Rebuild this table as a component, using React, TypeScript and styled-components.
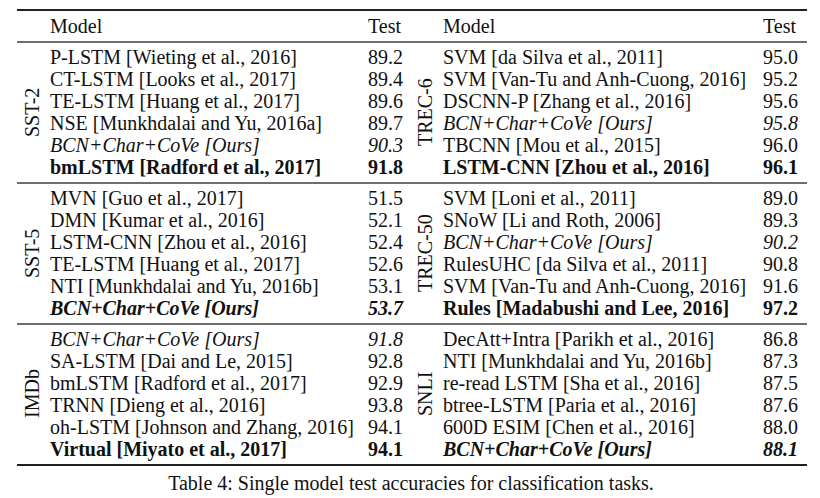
import { Fragment } from 'react'
import styled, { createGlobalStyle } from 'styled-components'

const GlobalStyle = createGlobalStyle`
  body {
    margin: 0;
    background: #fff;
    color: #111;
    font-family: 'Liberation Serif', 'Times New Roman', serif;
  }
`

type Style = 'plain' | 'italic' | 'bold' | 'bolditalic'

interface Row {
  model: string
  test: string
  style?: Style
}

interface Group {
  label: string
  rows: Row[]
}

const ours = 'BCN+Char+CoVe [Ours]'

const sections: [Group, Group][] = [
  [
    {
      label: 'SST-2',
      rows: [
        { model: 'P-LSTM [Wieting et al., 2016]', test: '89.2' },
        { model: 'CT-LSTM [Looks et al., 2017]', test: '89.4' },
        { model: 'TE-LSTM [Huang et al., 2017]', test: '89.6' },
        { model: 'NSE [Munkhdalai and Yu, 2016a]', test: '89.7' },
        { model: ours, test: '90.3', style: 'italic' },
        { model: 'bmLSTM [Radford et al., 2017]', test: '91.8', style: 'bold' },
      ],
    },
    {
      label: 'TREC-6',
      rows: [
        { model: 'SVM [da Silva et al., 2011]', test: '95.0' },
        { model: 'SVM [Van-Tu and Anh-Cuong, 2016]', test: '95.2' },
        { model: 'DSCNN-P [Zhang et al., 2016]', test: '95.6' },
        { model: ours, test: '95.8', style: 'italic' },
        { model: 'TBCNN [Mou et al., 2015]', test: '96.0' },
        { model: 'LSTM-CNN [Zhou et al., 2016]', test: '96.1', style: 'bold' },
      ],
    },
  ],
  [
    {
      label: 'SST-5',
      rows: [
        { model: 'MVN [Guo et al., 2017]', test: '51.5' },
        { model: 'DMN [Kumar et al., 2016]', test: '52.1' },
        { model: 'LSTM-CNN [Zhou et al., 2016]', test: '52.4' },
        { model: 'TE-LSTM [Huang et al., 2017]', test: '52.6' },
        { model: 'NTI [Munkhdalai and Yu, 2016b]', test: '53.1' },
        { model: ours, test: '53.7', style: 'bolditalic' },
      ],
    },
    {
      label: 'TREC-50',
      rows: [
        { model: 'SVM [Loni et al., 2011]', test: '89.0' },
        { model: 'SNoW [Li and Roth, 2006]', test: '89.3' },
        { model: ours, test: '90.2', style: 'italic' },
        { model: 'RulesUHC [da Silva et al., 2011]', test: '90.8' },
        { model: 'SVM [Van-Tu and Anh-Cuong, 2016]', test: '91.6' },
        { model: 'Rules [Madabushi and Lee, 2016]', test: '97.2', style: 'bold' },
      ],
    },
  ],
  [
    {
      label: 'IMDb',
      rows: [
        { model: ours, test: '91.8', style: 'italic' },
        { model: 'SA-LSTM [Dai and Le, 2015]', test: '92.8' },
        { model: 'bmLSTM [Radford et al., 2017]', test: '92.9' },
        { model: 'TRNN [Dieng et al., 2016]', test: '93.8' },
        { model: 'oh-LSTM [Johnson and Zhang, 2016]', test: '94.1' },
        { model: 'Virtual [Miyato et al., 2017]', test: '94.1', style: 'bold' },
      ],
    },
    {
      label: 'SNLI',
      rows: [
        { model: 'DecAtt+Intra [Parikh et al., 2016]', test: '86.8' },
        { model: 'NTI [Munkhdalai and Yu, 2016b]', test: '87.3' },
        { model: 're-read LSTM [Sha et al., 2016]', test: '87.5' },
        { model: 'btree-LSTM [Paria et al., 2016]', test: '87.6' },
        { model: '600D ESIM [Chen et al., 2016]', test: '88.0' },
        { model: ours, test: '88.1', style: 'bolditalic' },
      ],
    },
  ],
]

const Page = styled.div`
  padding-top: 9px;
  width: 820px;
`

const Table = styled.div`
  margin-left: 17px;
  width: 790px;
  border-top: 2px solid #222;
  border-bottom: 2px solid #222;
  font-size: 20px;
`

const Halves = styled.div<{ $rule?: boolean; $head?: boolean }>`
  display: grid;
  grid-template-columns: 393px 397px;
  padding: ${(p) => (p.$head ? '0' : '3px 0 4px')};
  border-top: ${(p) => (p.$rule ? '2px solid #6e6e6e' : 'none')};
`

const Panel = styled.div<{ $right?: boolean }>`
  display: grid;
  grid-template-columns: 33px 1fr ${(p) => (p.$right ? '44px' : '42px')};
  grid-auto-rows: 22px;
  line-height: 22px;
`

const HeadPanel = styled(Panel)`
  grid-auto-rows: 30px;
  line-height: 30px;
`

// dataset name, rotated to read bottom to top
const Label = styled.div`
  grid-row: 1 / span 6;
  grid-column: 1;
  display: flex;
  align-items: center;
  justify-content: center;
  writing-mode: vertical-rl;
  transform: rotate(180deg);
  padding-left: 3px;
`

const Cell = styled.div<{ $look?: Style }>`
  white-space: nowrap;
  font-style: ${(p) => (p.$look === 'italic' || p.$look === 'bolditalic' ? 'italic' : 'normal')};
  font-weight: ${(p) => (p.$look === 'bold' || p.$look === 'bolditalic' ? 'bold' : 'normal')};
`

const ModelCell = styled(Cell)`
  grid-column: 2;
`

const TestCell = styled(Cell)`
  grid-column: 3;
`

const Caption = styled.div`
  text-align: center;
  font-size: 20px;
  margin-top: 6px;
  padding-left: 2px;
`

const GroupPanel = ({ group, right }: { group: Group; right?: boolean }) => (
  <Panel $right={right}>
    <Label>{group.label}</Label>
    {group.rows.map((r, i) => (
      <Fragment key={i}>
        <ModelCell $look={r.style}>{r.model}</ModelCell>
        <TestCell $look={r.style}>{r.test}</TestCell>
      </Fragment>
    ))}
  </Panel>
)

export default function App() {
  return (
    <Page>
      <GlobalStyle />
      <Table>
        <Halves $head>
          <HeadPanel>
            <ModelCell>Model</ModelCell>
            <TestCell>Test</TestCell>
          </HeadPanel>
          <HeadPanel $right>
            <ModelCell>Model</ModelCell>
            <TestCell>Test</TestCell>
          </HeadPanel>
        </Halves>
        {sections.map(([l, r]) => (
          <Halves key={l.label} $rule>
            <GroupPanel group={l} />
            <GroupPanel group={r} right />
          </Halves>
        ))}
      </Table>
      <Caption>Table 4: Single model test accuracies for classification tasks.</Caption>
    </Page>
  )
}
